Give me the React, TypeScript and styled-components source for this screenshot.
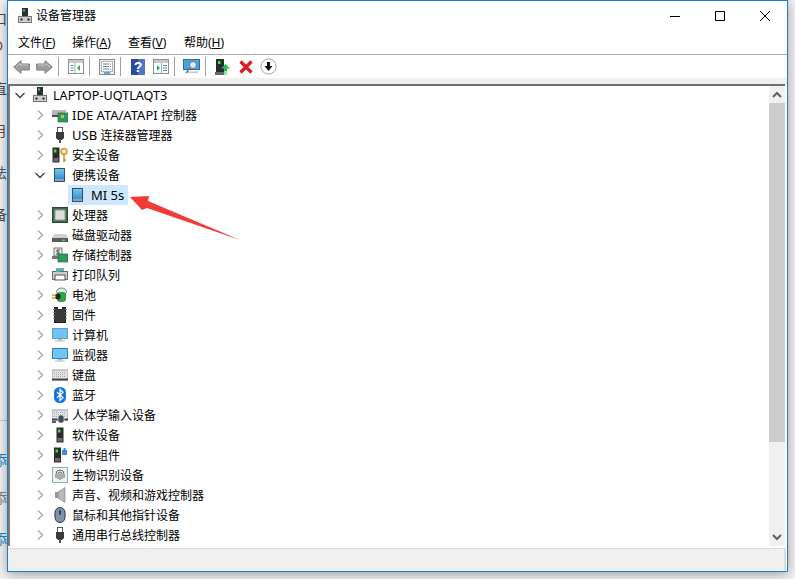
import React from "react";
import styled, { createGlobalStyle } from "styled-components";

const GlobalStyle = createGlobalStyle`
  html, body {
    margin: 0;
    padding: 0;
    width: 795px;
    height: 579px;
    overflow: hidden;
    background: #f4f4f4;
    font-family: "Noto Sans", "Noto Sans CJK SC", sans-serif;
    font-size: 12px;
    color: #000;
  }
`;

const Page = styled.div`
  position: relative;
  display: flex;
  width: 795px;
  height: 579px;
  overflow: hidden;
`;

const Backdrop = styled.div`
  width: 7px;
  flex: none;
  overflow: hidden;
  display: flex;
  flex-direction: column;
`;

const Peek = styled.div<{ $gap: number; $color?: string }>`
  margin-top: ${(p) => p.$gap}px;
  margin-left: -7px;
  height: 14px;
  line-height: 14px;
  font-size: 14px;
  white-space: nowrap;
  color: ${(p) => p.$color || "#4a4a4a"};
`;

const Rule = styled.div<{ $gap: number }>`
  margin-top: ${(p) => p.$gap}px;
  height: 1px;
  background: #c8c8c8;
`;

const Window = styled.div`
  position: relative;
  width: 781px;
  height: 572px;
  flex: none;
  box-sizing: border-box;
  border: 1px solid #1a7fd0;
  background: #fff;
  box-shadow: 0 2px 11px rgba(0, 0, 0, 0.38);
  display: flex;
  flex-direction: column;
`;

const TitleBar = styled.div`
  height: 30px;
  flex: none;
  box-sizing: border-box;
  display: flex;
  align-items: center;
  padding: 0 0 0 9px;
`;

const TitleText = styled.span`
  margin: 0 0 2px 3px;
  flex: 1;
`;

const WinButton = styled.div`
  width: 45px;
  height: 30px;
  display: flex;
  align-items: center;
  justify-content: center;
`;

const MenuBar = styled.div`
  height: 23px;
  flex: none;
  box-sizing: content-box;
  display: flex;
  align-items: center;
  padding-left: 10px;
  border-bottom: 1px solid #a9a9a9;
`;

const MenuItem = styled.div`
  width: 56px;
  margin-bottom: 2px;
  &:first-child {
    width: 54px;
  }
  u {
    text-underline-offset: 1px;
  }
`;

const Toolbar = styled.div`
  height: 23px;
  flex: none;
  display: flex;
  align-items: center;
  padding-left: 2px;
`;

const ToolButton = styled.div`
  width: 23px;
  height: 23px;
  display: flex;
  align-items: center;
  justify-content: center;
`;

const ToolSep = styled.div`
  width: 1px;
  height: 19px;
  margin: 0 5px 0 2px;
  background: #a0a0a0;
`;

const Band = styled.div`
  height: 6px;
  flex: none;
  background: #f0f0f0;
`;

const Body = styled.div`
  flex: 1;
  min-height: 0;
  display: flex;
  margin-right: 2px;
  border-top: 2px solid #6f6f6f;
  border-left: 2px solid #7b7b7b;
`;

const Tree = styled.div`
  flex: 1;
  overflow: hidden;
  margin-top: -1px;
`;

const Row = styled.div<{ $level: number }>`
  height: 20px;
  display: flex;
  align-items: center;
  padding-left: ${(p) => 2 + p.$level * 20}px;
`;

const Expander = styled.div`
  width: 16px;
  height: 16px;
  flex: none;
`;

const Node = styled.div<{ $selected?: boolean; $wide?: boolean }>`
  display: flex;
  align-items: center;
  gap: ${(p) => (p.$selected || p.$wide ? 5 : 4)}px;
  height: 20px;
  padding: 0 4px 0 ${(p) => (p.$selected ? 2 : 4)}px;
  background: ${(p) => (p.$selected ? "#cce8ff" : "transparent")};
  white-space: pre;
`;

const Label = styled.span`
  display: block;
`;

const Latin = styled.span<{ $size?: number }>`
  font-size: ${(p) => p.$size || 13}px;
`;

const Scrollbar = styled.div`
  width: 16px;
  flex: none;
  background: #f0f0f0;
  display: flex;
  flex-direction: column;
  align-items: stretch;
`;

const ScrollButton = styled.div`
  height: 17px;
  flex: none;
  display: flex;
  align-items: center;
  justify-content: center;
`;

const ScrollThumb = styled.div`
  height: 339px;
  flex: none;
  background: #cdcdcd;
`;

const ScrollTrack = styled.div`
  flex: 1;
`;

const StatusBar = styled.div`
  height: 23px;
  flex: none;
  margin: 2px 1px 0 0;
  box-sizing: border-box;
  border-top: 1px solid #dcdcdc;
  border-right: 2px solid #dcdcdc;
  background: #f0f0f0;
`;

const Annotation = styled.svg`
  position: absolute;
  left: 0;
  top: 0;
  pointer-events: none;
`;

const Chevron = ({ open }: { open?: boolean }) => (
  <svg width="16" height="16" viewBox="0 0 16 16" fill="none">
    {open ? (
      <path d="M3.5 6l4.5 4.5L12.5 6" stroke="#404040" strokeWidth="1.3" />
    ) : (
      <path d="M6 3.5L10.5 8 6 12.5" stroke="#a6a6a6" strokeWidth="1.3" />
    )}
  </svg>
);

const Tower = ({ x = 4 }: { x?: number }) => (
  <>
    <rect x={x} y="0.5" width="7" height="15" fill="#2b2b2b" />
    <rect x={x + 1} y="11" width="5" height="3.5" fill="#6a6a6a" />
    <rect x={x + 1.5} y="2.5" width="2.5" height="3" fill="#3fe04a" />
  </>
);

const UsbPlug = () => (
  <>
    <rect x="5.5" y="0.5" width="5" height="5" fill="#fff" stroke="#555" />
    <path d="M4 5h8v6l-2 2H6l-2-2z" fill="#3c3c3c" />
    <rect x="7" y="12" width="2" height="4" fill="#555" />
  </>
);

const Device = () => (
  <>
    <defs>
      <linearGradient id="deviceGlass" x1="0" y1="0" x2="0" y2="1">
        <stop offset="0" stopColor="#7cc6f2" />
        <stop offset="1" stopColor="#1f86d0" />
      </linearGradient>
    </defs>
    <rect x="2.5" y="1.5" width="10" height="13" fill="url(#deviceGlass)" stroke="#3c4f5e" />
    <rect x="3" y="12" width="9" height="2" fill="#8fa3b2" />
  </>
);

const Screen = ({ dark }: { dark?: boolean }) => (
  <>
    <rect x="0.5" y="1.5" width="15" height="10" fill="#6cc4f7" stroke={dark ? "#3a7fae" : "#6a9cbe"} />
    <rect x="6" y="12" width="4" height="1.5" fill="#b4b4b4" />
    <rect x="3" y="13.5" width="10" height="1.2" fill="#c4c4c4" />
  </>
);

const KeyboardShape = () => (
  <>
    <rect x="0" y="3" width="16" height="10" fill="#e4e4e4" stroke="#8a8a8a" strokeWidth="0.8" />
    <path d="M2 5.5h12M2 7.5h12M2 9.5h12" stroke="#a8a8a8" strokeDasharray="1 1" />
    <rect x="0" y="11.5" width="16" height="2" fill="#444" />
  </>
);

const treeIcons: Record<string, React.ReactNode> = {
  root: (
    <>
      <rect x="5" y="0" width="6" height="8" fill="#2e2e2e" />
      <rect x="6" y="1.5" width="2" height="2" fill="#45d24f" />
      <rect x="1.5" y="8.5" width="13" height="6" fill="#cfcfcf" stroke="#777" />
      <rect x="3.5" y="10.5" width="2" height="2" fill="#222" />
      <rect x="10.5" y="10.5" width="2" height="2" fill="#222" />
    </>
  ),
  ide: (
    <>
      <rect x="0" y="3" width="14" height="5" fill="#b8b8b8" />
      <rect x="0" y="8" width="9" height="2" fill="#4e4e4e" />
      <rect x="6" y="6" width="10" height="9" fill="#2e9a5f" stroke="#1c5c3a" strokeWidth="0.6" />
      <rect x="9" y="8" width="3" height="3" fill="#d9b54a" />
    </>
  ),
  usb: <UsbPlug />,
  security: (
    <>
      <Tower x={0.5} />
      <circle cx="12" cy="4.5" r="2.8" fill="none" stroke="#d7a63c" strokeWidth="2" />
      <path d="M12 7.5V15M12 13h2" stroke="#c9962e" strokeWidth="1.6" />
    </>
  ),
  portable: <Device />,
  cpu: (
    <>
      <rect x="0.5" y="0.5" width="15" height="15" fill="#3b6b4a" stroke="#23492f" />
      <rect x="3" y="3" width="10" height="10" fill="#dedede" stroke="#9a9a9a" />
    </>
  ),
  disk: (
    <>
      <path d="M2 7h12l2 4H0z" fill="#d0d0d0" />
      <rect x="0" y="11" width="16" height="4" fill="#5c5c5c" />
      <rect x="10" y="12.5" width="3" height="1.5" fill="#48d854" />
    </>
  ),
  storage: (
    <>
      <rect x="2" y="1" width="8" height="8" fill="#e8e8e8" stroke="#777" />
      <path d="M8 3H5v2h2v2H4" stroke="#444" fill="none" />
      <rect x="0" y="9" width="9" height="3" fill="#777" />
      <rect x="6" y="7" width="10" height="8" fill="#2e9a5f" stroke="#1c5c3a" strokeWidth="0.6" />
    </>
  ),
  printer: (
    <>
      <rect x="4" y="1" width="8" height="4" fill="#5cb0d8" />
      <rect x="0.5" y="4.5" width="15" height="8" fill="#cfcfcf" stroke="#6a6a6a" />
      <rect x="3" y="8" width="10" height="5" fill="#fff" stroke="#555" />
      <rect x="4" y="3" width="4" height="2" fill="#4fbf60" />
    </>
  ),
  battery: (
    <>
      <ellipse cx="9.5" cy="4.5" rx="5" ry="3.5" fill="#d8ece0" stroke="#6a8a76" />
      <rect x="5" y="5" width="9" height="10" rx="3" fill="#38a04c" />
      <path d="M0 8h5M0 11h5" stroke="#d29a20" strokeWidth="1.4" />
      <rect x="3.5" y="6.5" width="5" height="6" rx="2" fill="#262626" />
    </>
  ),
  firmware: (
    <>
      <rect x="2.5" y="0.5" width="11" height="15" fill="#3a3a3a" stroke="#1e1e1e" />
      <path d="M1 2.5h2M1 5.5h2M1 8.5h2M1 11.5h2M13 2.5h2M13 5.5h2M13 8.5h2M13 11.5h2" stroke="#888" />
      <rect x="6" y="0" width="4" height="2" fill="#fff" />
    </>
  ),
  computer: <Screen />,
  monitor: <Screen dark />,
  keyboard: <KeyboardShape />,
  bluetooth: (
    <>
      <rect x="2" y="0" width="12" height="16" rx="5.5" fill="#1377e0" />
      <path d="M5 5.2l6 5.4-3 2.9V2.5l3 2.8-6 5.4" stroke="#fff" strokeWidth="1.2" fill="none" />
    </>
  ),
  hid: (
    <>
      <KeyboardShape />
      <rect x="6" y="8" width="6" height="8" rx="2.5" fill="#3f4c5a" stroke="#fff" strokeWidth="0.6" />
      <path d="M0 15h4" stroke="#5a5a5a" strokeWidth="2" />
    </>
  ),
  softdev: <Tower x={4.5} />,
  softcomp: (
    <>
      <Tower x={2} />
      <rect x="10" y="3" width="5" height="5" fill="#2f8fe0" />
      <rect x="11.5" y="1" width="2" height="2.5" fill="#2f8fe0" />
    </>
  ),
  bio: (
    <>
      <rect x="0.5" y="0.5" width="15" height="15" fill="#eef4f2" stroke="#8fb0a6" />
      <path d="M4 11V7a4 4 0 018 0v4M6 12V7a2 2 0 014 0v5M8 6.5V13" stroke="#666" fill="none" />
    </>
  ),
  sound: (
    <>
      <rect x="3" y="5" width="4" height="6" fill="#9a9a9a" />
      <path d="M6 5l7-4.5v15L6 11z" fill="#b8b8b8" stroke="#7e7e7e" strokeWidth="0.6" />
    </>
  ),
  mouse: (
    <>
      <rect x="3" y="0.5" width="10" height="15" rx="5" fill="#7e93aa" stroke="#333" />
      <rect x="7" y="3" width="2" height="5" rx="1" fill="#39424c" />
    </>
  ),
};

const TreeIcon = ({ name }: { name: string }) => (
  <svg width="16" height="16" viewBox="0 0 16 16" style={{ flex: "none" }}>
    {treeIcons[name]}
  </svg>
);

type TreeRow = {
  level: number;
  icon: string;
  label: string;
  latin?: string;
  open?: boolean;
  leaf?: boolean;
  selected?: boolean;
};

const rows: TreeRow[] = [
  { level: 1, icon: "ide", latin: "IDE ATA/ATAPI ", label: "控制器" },
  { level: 1, icon: "usb", latin: "USB ", label: "连接器管理器" },
  { level: 1, icon: "security", label: "安全设备" },
  { level: 1, icon: "portable", label: "便携设备", open: true },
  { level: 2, icon: "portable", latin: "MI 5s", label: "", leaf: true, selected: true },
  { level: 1, icon: "cpu", label: "处理器" },
  { level: 1, icon: "disk", label: "磁盘驱动器" },
  { level: 1, icon: "storage", label: "存储控制器" },
  { level: 1, icon: "printer", label: "打印队列" },
  { level: 1, icon: "battery", label: "电池" },
  { level: 1, icon: "firmware", label: "固件" },
  { level: 1, icon: "computer", label: "计算机" },
  { level: 1, icon: "monitor", label: "监视器" },
  { level: 1, icon: "keyboard", label: "键盘" },
  { level: 1, icon: "bluetooth", label: "蓝牙" },
  { level: 1, icon: "hid", label: "人体学输入设备" },
  { level: 1, icon: "softdev", label: "软件设备" },
  { level: 1, icon: "softcomp", label: "软件组件" },
  { level: 1, icon: "bio", label: "生物识别设备" },
  { level: 1, icon: "sound", label: "声音、视频和游戏控制器" },
  { level: 1, icon: "mouse", label: "鼠标和其他指针设备" },
  { level: 1, icon: "usb", label: "通用串行总线控制器" },
];

const ArrowBack = ({ flip }: { flip?: boolean }) => (
  <svg width="17" height="14" viewBox="0 0 17 14" style={flip ? { transform: "scaleX(-1)" } : undefined}>
    <path d="M0.7 7L8 0.7V4h8.3v6H8v3.3z" fill="#9e9e9e" stroke="#7c7c7c" />
    <path d="M3 7l4-3.4V5h8" stroke="#c8c8c8" fill="none" />
  </svg>
);

const PaneIcon = ({ right }: { right?: boolean }) => (
  <svg width="16" height="15" viewBox="0 0 16 15">
    <rect x="0.5" y="0.5" width="15" height="14" fill="#fff" stroke="#8d8d8d" />
    <rect x="1" y="1" width="14" height="3" fill="#c2c8cc" />
    {right ? (
      <>
        <path d="M4 6v6l3-3z" fill="#2fae4a" />
        <path d="M10 6.5h4M10 9h4M10 11.5h4" stroke="#4f8fc4" />
        <path d="M8.5 4v10" stroke="#a8a8a8" />
      </>
    ) : (
      <>
        <path d="M2.5 6.5h3M2.5 9h3M2.5 11.5h3" stroke="#4f8fc4" />
        <path d="M12 6v6l-3-3z" fill="#2fae4a" />
        <path d="M7 4v10" stroke="#a8a8a8" />
      </>
    )}
  </svg>
);

const PropsIcon = () => (
  <svg width="16" height="16" viewBox="0 0 16 16">
    <rect x="0.5" y="0.5" width="15" height="15" fill="#eceff1" stroke="#8d8d8d" />
    <rect x="2.5" y="2.5" width="11" height="10" fill="#fff" stroke="#b4b4b4" />
    <path d="M4 5h8M4 7.5h8M4 10h8" stroke="#5b7f9e" strokeDasharray="6 1" />
    <rect x="5" y="13" width="6" height="2" fill="#4aa8e8" />
  </svg>
);

const HelpIcon = () => (
  <svg width="14" height="16" viewBox="0 0 14 16">
    <rect width="14" height="16" fill="#2c4a9c" />
    <rect x="7" width="7" height="16" fill="#4f74c8" />
    <text x="7" y="13" textAnchor="middle" fontSize="14" fontWeight="bold" fontFamily="Liberation Sans" fill="#fff">
      ?
    </text>
  </svg>
);

const ScanIcon = () => (
  <svg width="17" height="16" viewBox="0 0 17 16">
    <rect x="0.5" y="0.5" width="16" height="10" fill="#4aa3dc" stroke="#2f6f9f" />
    <rect x="3" y="12.5" width="12" height="1.5" fill="#b9c6cf" />
    <circle cx="10" cy="6" r="3.5" fill="#d8eefa" stroke="#777" />
    <path d="M7.5 8.5L3 14" stroke="#777" strokeWidth="1.6" />
  </svg>
);

const UpdateIcon = () => (
  <svg width="15" height="16" viewBox="0 0 15 16">
    <rect x="1" y="0" width="8" height="13" fill="#2b2b2b" />
    <rect x="3" y="2" width="2.5" height="3" fill="#3fe04a" />
    <rect x="0" y="13" width="9" height="3" fill="#666" />
    <path d="M10.5 5l4.5 4.5h-3V12h-3V9.5H6z" fill="#22c24c" />
    <path d="M9 13h3M9 15h3" stroke="#22c24c" />
  </svg>
);

const RemoveIcon = () => (
  <svg width="14" height="14" viewBox="0 0 14 14">
    <path d="M1.5 1.5l11 11M12.5 1.5l-11 11" stroke="#dd1a22" strokeWidth="3.2" />
  </svg>
);

const InstallIcon = () => (
  <svg width="17" height="17" viewBox="0 0 17 17">
    <circle cx="8.5" cy="8.5" r="7.6" fill="#fff" stroke="#a0a0a0" />
    <path d="M7 4h3v4h2.5l-4 5-4-5H7z" fill="#111" />
  </svg>
);

const App = () => (
  <Page>
    <GlobalStyle />
    <Backdrop>
      <Peek $gap={12}>口</Peek>
      <Peek $gap={13} $color="#7a4a30">D</Peek>
      <Peek $gap={29}>直</Peek>
      <Peek $gap={28} $color="#6a4a3a">月</Peek>
      <Peek $gap={28} $color="#4a5a6a">法</Peek>
      <Peek $gap={28}>备</Peek>
      <Rule $gap={198} />
      <Peek $gap={32} $color="#1b86c8">添</Peek>
      <Peek $gap={24} $color="#808080">添</Peek>
      <Peek $gap={27} $color="#1b86c8">添</Peek>
    </Backdrop>

    <Window>
      <TitleBar>
        <TreeIcon name="root" />
        <TitleText>设备管理器</TitleText>
        <WinButton>
          <svg width="10" height="10" viewBox="0 0 10 10">
            <path d="M0 5.5h10" stroke="#000" />
          </svg>
        </WinButton>
        <WinButton>
          <svg width="10" height="10" viewBox="0 0 10 10">
            <rect x="0.5" y="0.5" width="9" height="9" fill="none" stroke="#000" />
          </svg>
        </WinButton>
        <WinButton>
          <svg width="10" height="10" viewBox="0 0 10 10">
            <path d="M0 0l10 10M10 0L0 10" stroke="#000" />
          </svg>
        </WinButton>
      </TitleBar>

      <MenuBar>
        <MenuItem>文件(<u>F</u>)</MenuItem>
        <MenuItem>操作(<u>A</u>)</MenuItem>
        <MenuItem>查看(<u>V</u>)</MenuItem>
        <MenuItem>帮助(<u>H</u>)</MenuItem>
      </MenuBar>

      <Toolbar>
        <ToolButton><ArrowBack /></ToolButton>
        <ToolButton><ArrowBack flip /></ToolButton>
        <ToolSep />
        <ToolButton><PaneIcon /></ToolButton>
        <ToolSep />
        <ToolButton><PropsIcon /></ToolButton>
        <ToolSep />
        <ToolButton><HelpIcon /></ToolButton>
        <ToolButton><PaneIcon right /></ToolButton>
        <ToolSep />
        <ToolButton><ScanIcon /></ToolButton>
        <ToolSep />
        <ToolButton><UpdateIcon /></ToolButton>
        <ToolButton><RemoveIcon /></ToolButton>
        <ToolButton><InstallIcon /></ToolButton>
      </Toolbar>

      <Band />

      <Body>
        <Tree>
          <Row $level={0}>
            <Expander><Chevron open /></Expander>
            <Node $wide>
              <TreeIcon name="root" />
              <Label><Latin $size={12.6}>LAPTOP-UQTLAQT3</Latin></Label>
            </Node>
          </Row>
          {rows.map((r) => (
            <Row key={r.label + r.icon} $level={r.level}>
              <Expander>{!r.leaf && <Chevron open={r.open} />}</Expander>
              <Node $selected={r.selected}>
                <TreeIcon name={r.icon} />
                <Label>
                  {r.latin && <Latin>{r.latin}</Latin>}
                  {r.label}
                </Label>
              </Node>
            </Row>
          ))}
        </Tree>
        <Scrollbar>
          <ScrollButton>
            <svg width="10" height="7" viewBox="0 0 10 7">
              <path d="M1 6l4-4 4 4" stroke="#606060" strokeWidth="2" fill="none" />
            </svg>
          </ScrollButton>
          <ScrollThumb />
          <ScrollTrack />
          <ScrollButton>
            <svg width="10" height="7" viewBox="0 0 10 7">
              <path d="M1 1l4 4 4-4" stroke="#606060" strokeWidth="2" fill="none" />
            </svg>
          </ScrollButton>
        </Scrollbar>
      </Body>

      <StatusBar />
    </Window>

    <Annotation width="795" height="579" viewBox="0 0 795 579">
      <path d="M130 197L149 196L148 201L240 240L147 208L142 210Z" fill="#f43a36" />
    </Annotation>
  </Page>
);

export default App;
